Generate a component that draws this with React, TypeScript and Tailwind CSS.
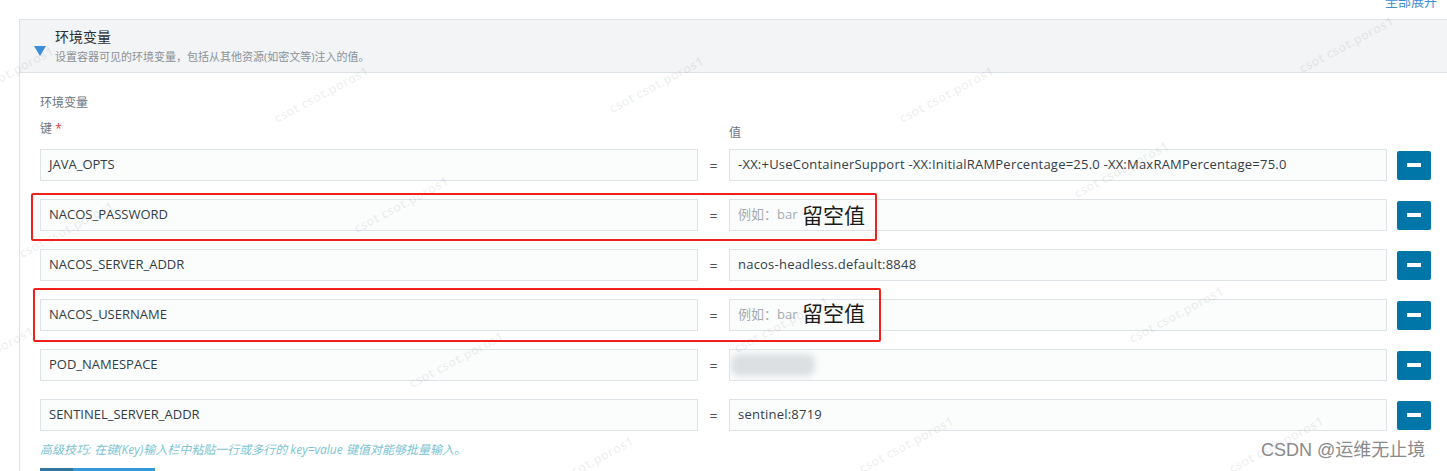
import React from "react";

const rows: { key: string; value?: string; placeholder?: boolean; blurred?: boolean }[] = [
  { key: "JAVA_OPTS", value: "-XX:+UseContainerSupport -XX:InitialRAMPercentage=25.0 -XX:MaxRAMPercentage=75.0" },
  { key: "NACOS_PASSWORD", placeholder: true },
  { key: "NACOS_SERVER_ADDR", value: "nacos-headless.default:8848" },
  { key: "NACOS_USERNAME", placeholder: true },
  { key: "POD_NAMESPACE", blurred: true },
  { key: "SENTINEL_SERVER_ADDR", value: "sentinel:8719" },
];

const watermarks: [number, number][] = [
  [-40, 50],
  [275, 70],
  [610, 60],
  [1300, 20],
  [20, 205],
  [355, 180],
  [1075, 145],
  [410, 335],
  [735, 300],
  [1130, 290],
  [540, 440],
  [1230, 420],
  [860, 420],
  [-60, 330],
  [900, 70],
];

function MinusButton() {
  return (
    <button className="w-[34px] h-[29px] rounded-[2px] bg-[#0075a8] flex items-center justify-center shrink-0">
      <span className="block w-[14px] h-[4px] bg-white" />
    </button>
  );
}

export default function App() {
  return (
    <div
      className="relative w-[1447px] h-[471px] overflow-hidden bg-white text-[#333d47]"
      style={{ fontFamily: '"Open Sans", "Noto Sans CJK SC", sans-serif' }}
    >
      {/* top link row */}
      <div className="h-[19px] flex justify-end pr-[10px] overflow-hidden">
        <span className="text-[13px] leading-[13px] -mt-[5px] text-[#3a8ed2]">全部展开</span>
      </div>

      {/* panel */}
      <div className="ml-[19px] border-l border-t border-[#dde3e6]">
        {/* header */}
        <div className="h-[53px] bg-[#f2f4f5] border-b border-[#dde3e6] flex items-center">
          <div className="w-[35px] flex justify-end pr-[9px] pt-[10px]">
            <svg width="12" height="10" viewBox="0 0 12 10">
              <polygon points="0,0 12,0 6,10" fill="#3b8fd6" />
            </svg>
          </div>
          <div className="flex flex-col">
            <span className="text-[14px] leading-[18px] text-[#2b2f33]">环境变量</span>
            <span className="text-[11px] leading-[16px] text-[#8a9199] mt-[3px]">
              设置容器可见的环境变量，包括从其他资源(如密文等)注入的值。
            </span>
          </div>
        </div>

        {/* body */}
        <div className="pl-[20px] pt-[22px]">
          <div className="text-[12px] leading-[16px] text-[#6b7580]">环境变量</div>
          <div className="flex mt-[10px] text-[12px] leading-[16px] text-[#6b7580]">
            <div className="w-[689px]">
              键 <span className="text-[#e0363a]">*</span>
            </div>
            <div className="mt-[4px]">值</div>
          </div>

          <div className="flex flex-col gap-[18px] mt-[8px]">
            {rows.map((r) => (
              <div key={r.key} className="flex items-center h-[32px]">
                <div className="w-[658px] h-[32px] border border-[#dde3e6] bg-[#fbfcfc] flex items-center pl-[8px] text-[13px]">
                  {r.key}
                </div>
                <div className="w-[31px] text-center text-[14px] text-[#4a525a]">=</div>
                <div className="w-[658px] h-[32px] border border-[#dde3e6] bg-[#fbfcfc] flex items-center pl-[8px] text-[13px] whitespace-nowrap overflow-hidden">
                  {r.value && <span className="tracking-[0.22px]">{r.value}</span>}
                  {r.placeholder && <span className="text-[#a4abb2]">例如：bar</span>}
                  {r.blurred && (
                    <span className="block w-[84px] h-[22px] ml-[-7px] rounded-[8px] bg-[#dcdfe2] blur-[3px]" />
                  )}
                </div>
                <div className="w-[10px]" />
                <MinusButton />
              </div>
            ))}
          </div>

          <div className="mt-[11px] text-[12px] leading-[16px] italic text-[#7cc4d2]">
            高级技巧: 在键(Key)输入栏中粘贴一行或多行的 key=value 键值对能够批量输入。
          </div>
          <div className="mt-[10px] flex h-[20px] w-[115px]">
            <div className="w-[33px] bg-[#3475a0]" />
            <div className="flex-1 bg-[#3598d8]" />
          </div>
        </div>
      </div>

      {/* watermarks */}
      {watermarks.map(([x, y], i) => (
        <span
          key={i}
          className="absolute text-[13px] font-bold text-[#000000]/[0.06] whitespace-nowrap pointer-events-none -rotate-[28deg] origin-left"
          style={{ left: x, top: y + 40 }}
        >
          csot csot.poros1
        </span>
      ))}

      {/* annotations */}
      <div className="absolute left-[31px] top-[193px] w-[846px] h-[48px] border-2 border-[#f2201c] rounded-[2px] pointer-events-none" />
      <div className="absolute left-[33px] top-[288px] w-[848px] h-[54px] border-2 border-[#f2201c] rounded-[2px] pointer-events-none" />
      <div className="absolute left-[802px] top-[200px] text-[21px] leading-[30px] text-[#1b1b1b]">留空值</div>
      <div className="absolute left-[802px] top-[298px] text-[21px] leading-[30px] text-[#1b1b1b]">留空值</div>

      <div
        className="absolute left-[1261px] top-[437px] text-[18px] leading-[26px] text-[#8a8a8a]"
        style={{ fontFamily: '"Liberation Sans", "Noto Sans CJK SC", sans-serif' }}
      >
        CSDN @运维无止境
      </div>
    </div>
  );
}
